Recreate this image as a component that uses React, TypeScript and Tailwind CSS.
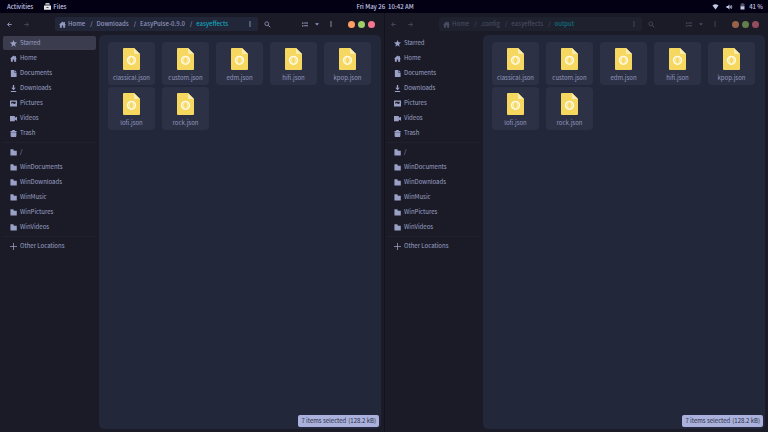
import React from "react";

type IconName =
  | "star"
  | "home"
  | "document"
  | "download"
  | "picture"
  | "video"
  | "trash"
  | "folder"
  | "plus";

const iconPaths: Record<IconName, string> = {
  star: "M8 0l2.200 5.400 5.800.4-4.500 3.700 1.500 5.700L8 12.200l-5 3 1.500-5.700L0 5.800l5.800-.4z",
  home: "M8 1L0 8.500H2V15.500H6.500V10.500H9.500V15.500H14V8.500H16L13.500 6V2.500H11V4z",
  document: "M2 0h7.500v5.500H15V16H2zM10.500 0L15 4.500h-4.500z",
  download: "M6.500 0h3v6.500h3.500L8 12 3 6.500h3.500zM2 13.500h12V16H2z",
  picture: "M0 1h16v14H0zM3 4v5l3-2 3 2 4-1V4z",
  video: "M0 2.500h11v3.500L16 4v9l-5-2.500V14H0z",
  trash: "M5 0h6v2H15V5H1V2h4zM1.500 5.500h13v9L13 16H3l-1.500-1.500z",
  folder: "M1 .5h6.500L9 4h6.500V15H1z",
  plus: "M7.200 0h1.800v7H16v1.800H9V16H7.200V8.800H0V7h7.200z",
};

const Icon = ({ name }: { name: IconName }) => (
  <svg
    viewBox="0 0 16 16"
    className="h-[7px] w-[7px] shrink-0 fill-current"
    fillRule="evenodd"
    aria-hidden="true"
  >
    <path d={iconPaths[name]} />
  </svg>
);

const Dots = () => (
  <svg viewBox="0 0 2 6" className="h-[6px] w-[2px] fill-current">
    <circle cx="1" cy="1" r=".8" />
    <circle cx="1" cy="3" r=".8" />
    <circle cx="1" cy="5" r=".8" />
  </svg>
);

const places: { label: string; icon: IconName }[] = [
  { label: "Starred", icon: "star" },
  { label: "Home", icon: "home" },
  { label: "Documents", icon: "document" },
  { label: "Downloads", icon: "download" },
  { label: "Pictures", icon: "picture" },
  { label: "Videos", icon: "video" },
  { label: "Trash", icon: "trash" },
];

const bookmarks: { label: string; icon: IconName }[] = [
  { label: "/", icon: "folder" },
  { label: "WinDocuments", icon: "folder" },
  { label: "WinDownloads", icon: "folder" },
  { label: "WinMusic", icon: "folder" },
  { label: "WinPictures", icon: "folder" },
  { label: "WinVideos", icon: "folder" },
];

const files = [
  "classical.json",
  "custom.json",
  "edm.json",
  "hifi.json",
  "kpop.json",
  "lofi.json",
  "rock.json",
];

const TopBar = () => (
  <div className="grid h-[13px] shrink-0 grid-cols-3 items-center bg-[#030014] pr-[5px] pl-[7px] font-medium text-[#c3c8e6]">
    <div className="flex items-center gap-[11px]">
      <button type="button">Activities</button>
      <button type="button" className="flex items-center gap-[2px]">
        <svg viewBox="0 0 14 14" className="h-[7px] w-[7px]" aria-hidden="true">
          <path d="M3 0h8v5H3z" fill="#bfbfc4" />
          <path d="M0 5h14v8.500H0z" fill="#e4e4e4" />
          <path d="M4 3h6v1.500H4zM5 8h4v2H5z" fill="#4a4a50" />
        </svg>
        Files
      </button>
    </div>
    <div className="flex justify-center gap-[3px]">
      <span>Fri May 26</span>
      <span>10:42 AM</span>
    </div>
    <div className="flex items-center justify-end">
      <svg viewBox="0 0 14 12" className="mr-[7px] h-[6px] w-[7px] fill-current">
        <path d="M1 3Q7-2 13 3L7 11z" />
      </svg>
      <svg viewBox="0 0 14 12" className="mr-[7px] h-[6px] w-[7px]">
        <path d="M1 4h2.500L7 1v10L3.500 8H1z" fill="currentColor" />
        <path
          d="M8.500 4q1.500 2 0 4M10 2q3.500 4 0 8"
          fill="none"
          stroke="currentColor"
          strokeWidth="1.500"
        />
      </svg>
      <svg viewBox="0 0 10 14" className="mr-[4px] h-[7px] w-[5px] fill-current">
        <path d="M3 0h4v2h2v5H1V2h2z" opacity=".4" />
        <path d="M1 6.500h8V13H1z" />
      </svg>
      <span>41 %</span>
    </div>
  </div>
);

const HeaderBar = ({ path, active }: { path: string[]; active: boolean }) => (
  <header
    className={`flex h-[22px] shrink-0 items-center pr-[9px] font-medium ${
      active ? "text-[#9298be]" : "text-[#484b62]"
    }`}
  >
    <button type="button" aria-label="Back" className="flex w-[19px] justify-center">
      <svg viewBox="0 0 10 10" className="h-[5px] w-[5px]">
        <path d="M9.500 5H1.500M5 1L1 5l4 4" fill="none" stroke="currentColor" strokeWidth="1.800" />
      </svg>
    </button>
    <button
      type="button"
      aria-label="Forward"
      className="flex w-[15px] justify-center text-[#43465c]"
    >
      <svg viewBox="0 0 10 10" className="h-[5px] w-[5px]">
        <path d="M.5 5h8M5 1l4 4-4 4" fill="none" stroke="currentColor" strokeWidth="1.800" />
      </svg>
    </button>
    <nav
      className={`ml-[21px] flex h-[14px] min-w-0 flex-1 items-center rounded-[2px] pr-[7px] pl-[4px] ${
        active ? "bg-[#222639]" : "bg-[#1e212e]"
      }`}
    >
      <Icon name="home" />
      <ol className="ml-[2px] flex flex-1 items-center whitespace-nowrap">
        {path.map((part, i) => (
          <li key={part} className="flex">
            {i > 0 && <span className="mr-[4px] ml-[5px]">/</span>}
            <a
              href="#"
              className={
                i < path.length - 1
                  ? ""
                  : active
                    ? "text-[#12a5b9]"
                    : "text-[#127080]"
              }
            >
              {part}
            </a>
          </li>
        ))}
      </ol>
      <button type="button" aria-label="Path menu">
        <Dots />
      </button>
    </nav>
    <button type="button" aria-label="Search" className="ml-[6px]">
      <svg viewBox="0 0 14 14" className="h-[7px] w-[7px]">
        <circle cx="5.500" cy="5.500" r="3.800" fill="none" stroke="currentColor" strokeWidth="1.600" />
        <path d="M8.500 8.500l4 4" stroke="currentColor" strokeWidth="2" />
      </svg>
    </button>
    <button type="button" aria-label="List view" className="ml-[31px]">
      <svg viewBox="0 0 6 5" className="h-[5px] w-[6px] fill-current">
        <path d="M0 .5h1.500v1.200H0zM2.200.5H6v1H2.200zM0 3.200h1.500v1.200H0zM2.200 3.300H6v1H2.200z" />
      </svg>
    </button>
    <button type="button" aria-label="View options" className="ml-[7px]">
      <svg viewBox="0 0 4 3" className="h-[3px] w-[4px] fill-current">
        <path d="M0 .3h4L2 2.600z" />
      </svg>
    </button>
    <button type="button" aria-label="Menu" className="ml-[11px]">
      <Dots />
    </button>
    <div className={`ml-[16px] flex gap-[3px] ${active ? "" : "opacity-55"}`}>
      <button type="button" aria-label="Minimize" className="h-[7px] w-[7px] rounded-full bg-[#ff9e64]" />
      <button type="button" aria-label="Maximize" className="h-[7px] w-[7px] rounded-full bg-[#9ece6a]" />
      <button type="button" aria-label="Close" className="h-[7px] w-[7px] rounded-full bg-[#f7768e]" />
    </div>
  </header>
);

const PlaceLink = ({
  label,
  icon,
  selected,
}: {
  label: string;
  icon: IconName;
  selected?: boolean;
}) => (
  <a
    href="#"
    className={`flex h-[14px] items-center gap-[3px] rounded-[2px] pl-[7px] ${
      selected ? "bg-[#3b3c4d]" : ""
    }`}
  >
    <Icon name={icon} />
    {label}
  </a>
);

const Sidebar = ({ active }: { active: boolean }) => (
  <aside className="flex w-[99px] shrink-0 flex-col gap-px px-[3px] pt-px text-[#9ba1c6]">
    {places.map((item) => (
      <PlaceLink key={item.label} {...item} selected={active && item.label === "Starred"} />
    ))}
    <hr className="my-px border-[#20212d]" />
    {bookmarks.map((item) => (
      <PlaceLink key={item.label} {...item} />
    ))}
    <hr className="my-px border-[#20212d]" />
    <PlaceLink label="Other Locations" icon="plus" />
  </aside>
);

const FileCard = ({ name }: { name: string }) => (
  <li className="flex h-[43px] w-[47px] flex-col items-center rounded-[4px] bg-[#2d3145] pt-[6px] text-[#9298bd]">
    <svg viewBox="0 0 17 22" className="h-[22px] w-[17px]" aria-hidden="true">
      <path d="M1 0h10l6 6v15q0 1-1 1H1q-1 0-1-1V1q0-1 1-1z" fill="#f6d861" />
      <path d="M11 0l6 6h-5q-1 0-1-1z" fill="#fbecb0" />
      <circle cx="8.500" cy="12.300" r="3.900" fill="none" stroke="#fffbe8" strokeWidth="1.500" />
      <path
        d="M7.200 9.800q-1.800 2.500 0 5M9.800 9.800q1.800 2.500 0 5"
        fill="none"
        stroke="#fffbe8"
        strokeWidth=".7"
      />
    </svg>
    <span className="mt-[4px] leading-[8px]">{name}</span>
  </li>
);

const FilesWindow = ({ path, active }: { path: string[]; active: boolean }) => (
  <section
    className={`flex min-w-0 flex-col bg-[#1b1b27] ${
      active ? "" : "shadow-[inset_1px_0_#12121b]"
    }`}
  >
    <HeaderBar path={path} active={active} />
    <div className="flex flex-1">
      <Sidebar active={active} />
      <main className="mr-[3px] mb-[3px] flex min-w-0 flex-1 flex-col justify-between rounded-[5px] bg-[#23273a]">
        <ul className="flex flex-wrap gap-x-[7px] gap-y-[2px] pt-[7px] pl-[9px]">
          {files.map((file) => (
            <FileCard key={file} name={file} />
          ))}
        </ul>
        <div className="mr-[2px] mb-[2px] flex h-[12px] items-center gap-[2px] self-end rounded-[2px] bg-[#a9b1dc] px-[3px] text-[#2d3045]">
          <span>7 items selected</span>
          <span>(128.2 kB)</span>
        </div>
      </main>
    </div>
  </section>
);

const App = () => {
  return (
    <div className="flex min-h-screen flex-col bg-[#1b1b27] font-['Noto_Sans_CJK_JP',sans-serif] text-[6px] leading-[8px]">
      <TopBar />
      <div className="grid flex-1 grid-cols-2">
        <FilesWindow path={["Home", "Downloads", "EasyPulse-0.9.0", "easyeffects"]} active />
        <FilesWindow path={["Home", ".config", "easyeffects", "output"]} active={false} />
      </div>
    </div>
  );
};

export default App;
